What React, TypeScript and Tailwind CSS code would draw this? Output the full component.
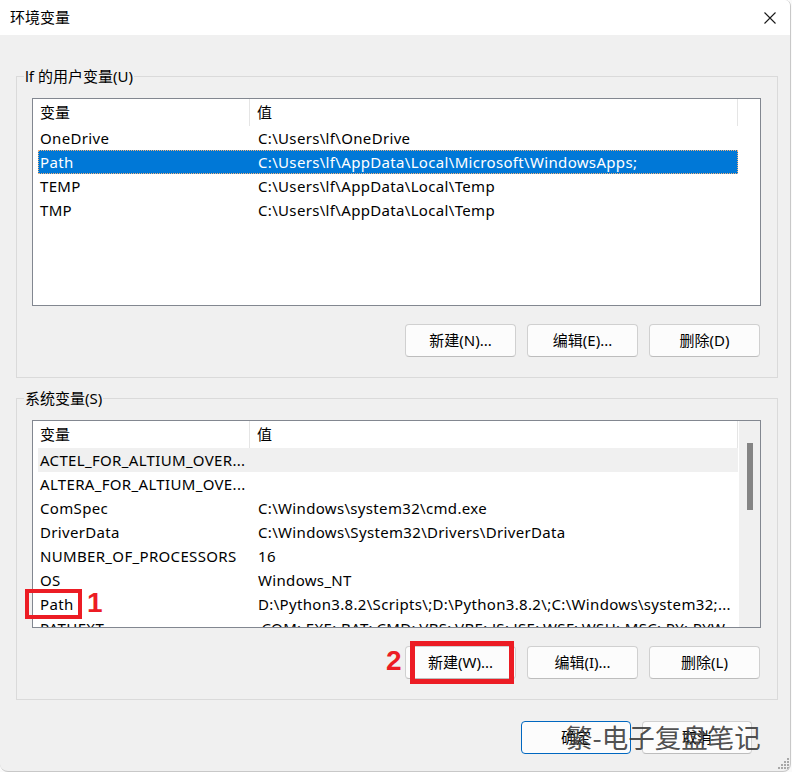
import React from "react";

// Environment variables dialog (Windows 11 style)
const userVars: [string, string][] = [
  ["OneDrive", "C:\\Users\\lf\\OneDrive"],
  ["Path", "C:\\Users\\lf\\AppData\\Local\\Microsoft\\WindowsApps;"],
  ["TEMP", "C:\\Users\\lf\\AppData\\Local\\Temp"],
  ["TMP", "C:\\Users\\lf\\AppData\\Local\\Temp"],
];

const systemVars: [string, string][] = [
  ["ACTEL_FOR_ALTIUM_OVER...", ""],
  ["ALTERA_FOR_ALTIUM_OVE...", ""],
  ["ComSpec", "C:\\Windows\\system32\\cmd.exe"],
  ["DriverData", "C:\\Windows\\System32\\Drivers\\DriverData"],
  ["NUMBER_OF_PROCESSORS", "16"],
  ["OS", "Windows_NT"],
  ["Path", "D:\\Python3.8.2\\Scripts\\;D:\\Python3.8.2\\;C:\\Windows\\system32;..."],
  ["PATHEXT", ".COM;.EXE;.BAT;.CMD;.VBS;.VBE;.JS;.JSE;.WSF;.WSH;.MSC;.PY;.PYW"],
];

function Button({ label, primary, narrow }: { label: string; primary?: boolean; narrow?: boolean }) {
  return (
    <button
      className={
        "h-[33px] rounded-[4px] bg-[#fcfcfc] text-[15px] text-black flex items-center justify-center " +
        (narrow ? "w-[110px] " : "w-[111px] ") +
        (primary ? "border border-[#0067c0]" : "border border-[#d0d0d0] border-b-[#bdbdbd]")
      }
    >
      {label}
    </button>
  );
}

function VarList({
  rows,
  selected,
  hovered,
  scroll,
}: {
  rows: [string, string][];
  selected?: number;
  hovered?: number;
  scroll?: boolean;
}) {
  return (
    <div className="h-[208px] border border-[#828790] bg-white flex overflow-hidden">
      <div className="w-[705px] pl-[5px] flex flex-col">
        {/* header */}
        <div className="h-[27px] shrink-0 flex items-center text-[15px]">
          <div className="w-[212px] h-full flex items-center pl-[2px] border-r border-[#e5e5e5]">变量</div>
          <div className="flex-1 h-full flex items-center pl-[7px] border-r border-[#e5e5e5]">值</div>
        </div>
        {rows.map(([name, value], i) => (
          <div
            key={name + i}
            className={
              "h-[24px] shrink-0 flex items-center text-[15px] tracking-[0.33px] whitespace-nowrap " +
              (i === selected
                ? "bg-[#0078d7] text-white outline outline-1 outline-dotted outline-[#f5b37a] -outline-offset-1"
                : i === hovered
                ? "bg-[#f0f0f0] text-black"
                : "text-black")
            }
          >
            <div className="w-[212px] pl-[2px] overflow-hidden">{name}</div>
            <div className="flex-1 pl-[8px] overflow-hidden">{value}</div>
          </div>
        ))}
      </div>
      {scroll ? (
        <div className="flex-1 ml-[1px] bg-[#f0f0f0] flex justify-center pt-[22px]">
          <div className="w-[6px] h-[67px] bg-[#858585] ml-[1px]" />
        </div>
      ) : (
        <div className="flex-1" />
      )}
    </div>
  );
}

function Group({
  title,
  children,
  className,
}: {
  title: string;
  children: React.ReactNode;
  className?: string;
}) {
  return (
    <fieldset className={"ml-[16px] w-[762px] border border-[#dadada] " + (className ?? "")}>
      <legend className="ml-[7px] px-[1px] h-[20px] leading-[20px] text-[15px] text-black">{title}</legend>
      <div className="pl-[15px] pr-[16px] pt-[12px] pb-[20px]">{children}</div>
    </fieldset>
  );
}

export default function App() {
  return (
    <div className="w-[792px] h-[772px] bg-[#fafafa] font-['Noto_Sans','Noto_Sans_CJK_SC',sans-serif]">
      <div className="relative w-[791px] h-[772px] bg-[#f0f0f0] border-r border-b border-[#c8c8c8] rounded-b-[8px] rounded-tr-[6px] overflow-hidden">
        {/* title bar */}
        <div className="h-[35px] bg-white flex items-center justify-between pl-[10px] pr-[13px]">
          <span className="text-[15px] text-black">环境变量</span>
          <svg width="12" height="12" viewBox="0 0 12 12" className="mr-[1px]">
            <path d="M0.5 0.5 L11.5 11.5 M11.5 0.5 L0.5 11.5" stroke="#1a1a1a" strokeWidth="1.1" />
          </svg>
        </div>

        <Group title="lf 的用户变量(U)" className="mt-[31px]">
          <VarList rows={userVars} selected={1} />
          <div className="mt-[18px] flex justify-end gap-[11px] pr-[1px]">
            <Button label="新建(N)..." />
            <Button label="编辑(E)..." />
            <Button label="删除(D)" />
          </div>
        </Group>

        <Group title="系统变量(S)" className="mt-[10px]">
          <VarList rows={systemVars} hovered={0} scroll />
          <div className="mt-[18px] flex justify-end gap-[11px] pr-[1px]">
            <Button label="新建(W)..." />
            <Button label="编辑(I)..." />
            <Button label="删除(L)" />
          </div>
        </Group>

        <div className="mt-[21px] flex justify-end gap-[11px] pr-[38px]">
          <Button label="确定" primary narrow />
          <Button label="取消" narrow />
        </div>

        {/* red annotations */}
        <div className="absolute left-[25px] top-[589px] w-[57px] h-[30px] border-[4px] border-[#ec1c24]" />
        <span className="absolute left-[87px] top-[587px] text-[28px] leading-[32px] font-bold text-[#ec1c24] font-['Liberation_Sans',sans-serif]">
          1
        </span>
        <div className="absolute left-[410px] top-[641px] w-[104px] h-[43px] border-[5px] border-[#ec1c24]" />
        <span className="absolute left-[386px] top-[645px] text-[28px] leading-[32px] font-bold text-[#ec1c24] font-['Liberation_Sans',sans-serif]">
          2
        </span>

        {/* watermark */}
        <span className="absolute left-[566px] top-[719px] text-[26.5px] leading-[36px] text-[#3a3a3a]/90 font-['Noto_Sans_CJK_SC',sans-serif] whitespace-nowrap">
          繁-电子复盘笔记
        </span>

        {/* resize grip */}
        <svg width="12" height="12" viewBox="0 0 12 12" className="absolute right-[1px] bottom-[1px]">
          {[
            [10, 0],
            [7, 3],
            [10, 3],
            [4, 6],
            [7, 6],
            [10, 6],
            [1, 9],
            [4, 9],
            [7, 9],
            [10, 9],
          ].map(([x, y]) => (
            <rect key={`${x}-${y}`} x={x} y={y} width="2" height="2" fill="#a8a8a8" />
          ))}
        </svg>
      </div>
    </div>
  );
}
